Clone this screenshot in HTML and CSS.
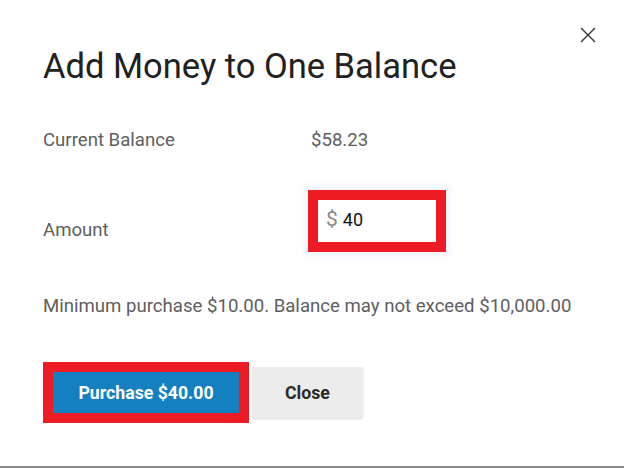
FILE: index.html
```html
<!DOCTYPE html>
<html>
<head>
<meta charset="utf-8">
<link rel="stylesheet" href="styles.css">
</head>
<body>
<div class="dialog">
  <button class="close-x" aria-label="Close">
    <svg width="16" height="16" viewBox="0 0 16 16"><path d="M1 1 L15 15 M15 1 L1 15" stroke="#333" stroke-width="1.4" fill="none"/></svg>
  </button>
  <h1 class="title">Add Money to One Balance</h1>
  <div class="row balance-row">
    <div class="label">Current Balance</div>
    <div class="value">$58.23</div>
  </div>
  <div class="row amount-row">
    <div class="label amount-label">Amount</div>
    <div class="input-box"><span class="currency">$</span><span class="amount">40</span></div>
  </div>
  <p class="note">Minimum purchase $10.00. Balance may not exceed $10,000.00</p>
  <div class="actions">
    <button class="btn btn-primary">Purchase $40.00</button>
    <button class="btn btn-secondary">Close</button>
  </div>
</div>
</body>
</html>
```
FILE: styles.css
```css
* { box-sizing: border-box; }
html, body { margin: 0; padding: 0; background: #fff; }
body {
  font-family: Roboto, "Liberation Sans", sans-serif;
  width: 624px;
  height: 468px;
  overflow: hidden;
}
.dialog {
  position: relative;
  height: 468px;
  padding: 44px 0 0 43px;
  border-bottom: 2px solid #8c8c8c;
}
.close-x {
  position: absolute;
  top: 27px;
  left: 580px;
  width: 16px;
  height: 16px;
  padding: 0;
  border: 0;
  background: none;
  display: block;
}
.close-x svg { display: block; }
.title {
  margin: 0;
  font-size: 34.5px;
  font-weight: 400;
  color: #212121;
  line-height: 44px;
}
.row {
  display: flex;
  align-items: flex-start;
}
.label, .value, .note {
  font-size: 18.6px;
  color: #5e5e5e;
  line-height: 22px;
}
.label { width: 268px; }
.balance-row { margin-top: 41px; }
.amount-row { margin-top: 49px; }
.amount-label { padding-top: 19px; }
.input-box {
  margin-left: 7px;
  width: 118px;
  height: 42px;
  background: #fff;
  display: flex;
  align-items: center;
  padding: 0 0 4px 8px;
  font-size: 18px;
  box-shadow: 0 0 0 10px #ed1c24, 0 0 6px 14px rgba(225, 235, 250, 0.6);
}
.currency { color: #8a8a8a; font-size: 21px; margin-right: 5px; }
.amount { color: #111; }
.note { margin: 53px 0 0 0; }
.actions {
  margin-top: 50px;
  display: flex;
  align-items: center;
  gap: 13px;
  padding-left: 10px;
}
.btn {
  font-family: Roboto, "Liberation Sans", sans-serif;
  font-weight: 700;
  font-size: 17.7px;
  border: 0;
  padding: 0;
}
.btn-primary {
  width: 186px;
  height: 41px;
  background: #1580c1;
  color: #fff;
  border-radius: 0;
  box-shadow: 0 0 0 10px #ed1c24;
}
.btn-secondary {
  width: 111px;
  height: 51px;
  background: #ececec;
  color: #2a2a2a;
  border-radius: 2px;
  box-shadow: 0 1px 2px rgba(0,0,0,0.15);
}
```
